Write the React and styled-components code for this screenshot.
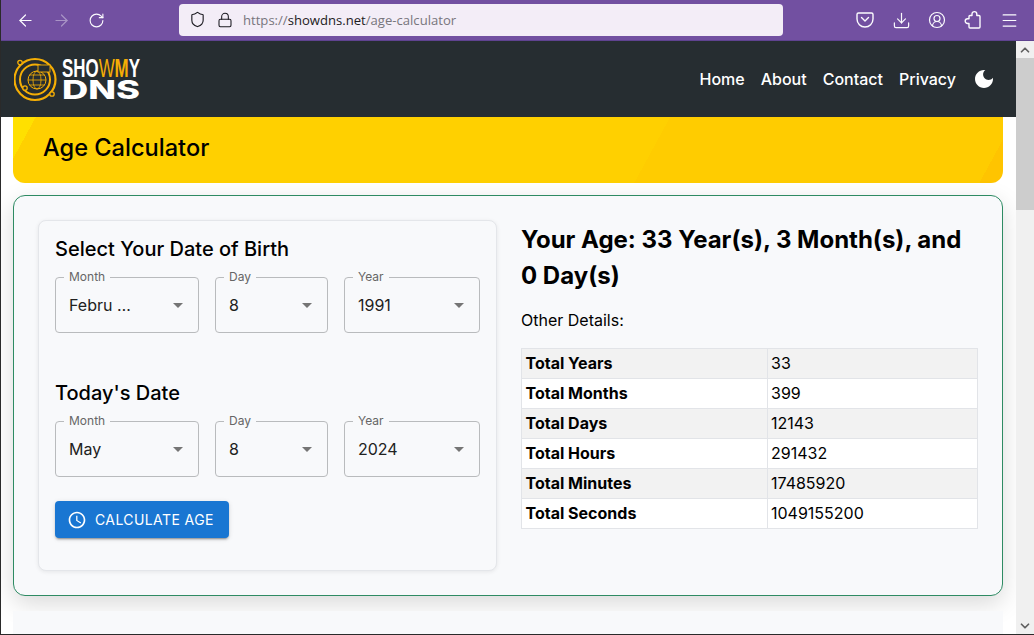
import styled, { createGlobalStyle } from 'styled-components';
import { ArrowLeft, ArrowRight, RotateCw, Shield, Lock, Download, CircleUserRound, Menu, ChevronUp, ChevronDown } from 'lucide-react';

const GlobalStyle = createGlobalStyle`
  html, body {
    margin: 0;
    height: 100%;
    overflow: hidden;
    background: #fff;
  }
  body {
    font-family: 'Inter', 'Liberation Sans', sans-serif;
    color: #000;
  }
`;

const birthFields = [
  { label: 'Month', value: 'Febru …' },
  { label: 'Day', value: '8' },
  { label: 'Year', value: '1991' },
];
const todayFields = [
  { label: 'Month', value: 'May' },
  { label: 'Day', value: '8' },
  { label: 'Year', value: '2024' },
];
const details = [
  ['Total Years', '33'],
  ['Total Months', '399'],
  ['Total Days', '12143'],
  ['Total Hours', '291432'],
  ['Total Minutes', '17485920'],
  ['Total Seconds', '1049155200'],
];

const Logo = () => (
  <svg width='130' height='58' viewBox='0 -4 130 58'>
    <g fill='none' stroke='#f5ae05'>
      <circle cx='21' cy='25.5' r='20.5' strokeWidth='2.2' />
      <circle cx='21' cy='25.5' r='15' strokeWidth='2' />
      <circle cx='6' cy='8.5' r='2.2' strokeWidth='1.3' fill='#262d31' />
      <circle cx='11' cy='34' r='2.2' strokeWidth='1.3' fill='#262d31' />
      <circle cx='38' cy='40' r='2.2' strokeWidth='1.3' fill='#262d31' />
      <circle cx='23' cy='26' r='9' strokeWidth='1' />
      <ellipse cx='23' cy='26' rx='4' ry='9' strokeWidth='.8' />
      <path strokeWidth='.8' d='M14 26h18M15.5 21h15M15.5 31h15' />
      <rect x='24' y='11' width='12' height='7' strokeWidth='.9' fill='#262d31' />
    </g>
    <text x='48' y='23' fontFamily='Liberation Sans' fontWeight='700' fontSize='25' fill='#fff' textLength='78' lengthAdjust='spacingAndGlyphs'>
      SHO<tspan fill='#f5ae05' fontWeight='400'>W</tspan><tspan fill='#f5ae05'>M</tspan>Y
    </text>
    <text x='48' y='45' fontFamily='Inter' fontWeight='800' fontSize='26' fill='#fff' textLength='78' lengthAdjust='spacingAndGlyphs'>DNS</text>
  </svg>
);

const PocketIcon = () => (
  <svg width='20' height='20' viewBox='0 0 20 20' fill='none' stroke='currentColor' strokeWidth='1.4' strokeLinecap='round' strokeLinejoin='round'>
    <path d='M3.5 3h13A1.5 1.5 0 0 1 18 4.5V9a8 8 0 0 1-16 0V4.5A1.5 1.5 0 0 1 3.5 3z' />
    <path d='M6.5 7.5 10 11l3.5-3.5' />
  </svg>
);

const PuzzleIcon = () => (
  <svg width='20' height='20' viewBox='0 0 20 20' fill='none' stroke='currentColor' strokeWidth='1.4' strokeLinejoin='round'>
    <path d='M9 5.5V4a2.4 2.4 0 0 1 4.8 0v1.5H16a1 1 0 0 1 1 1V17a1 1 0 0 1-1 1H7a1 1 0 0 1-1-1v-3.5H4.6a2.4 2.4 0 0 1 0-4.8H6V6.5a1 1 0 0 1 1-1z' />
  </svg>
);

const MoonIcon = () => (
  <svg width='24' height='24' viewBox='0 0 24 24' fill='#fff'>
    <path d='M12 3c-4.97 0-9 4.03-9 9s4.03 9 9 9 9-4.03 9-9c0-.46-.04-.92-.1-1.36-.98 1.37-2.58 2.26-4.4 2.26-2.98 0-5.4-2.42-5.4-5.4 0-1.81.89-3.42 2.26-4.4-.44-.06-.9-.1-1.36-.1z' />
  </svg>
);

const ClockIcon = () => (
  <svg width='20' height='20' viewBox='0 0 24 24' fill='#fff'>
    <path d='M11.99 2C6.47 2 2 6.48 2 12s4.47 10 9.99 10C17.52 22 22 17.52 22 12S17.52 2 11.99 2zM12 20c-4.42 0-8-3.58-8-8s3.58-8 8-8 8 3.58 8 8-3.58 8-8 8zm.5-13H11v6l5.25 3.15.75-1.23-4.5-2.67z' />
  </svg>
);

const SelectRow = ({ fields }) => (
  <Selects>
    {fields.map((f) => (
      <SelectBox key={f.label}>
        <FloatLabel>{f.label}</FloatLabel>
        <span>{f.value}</span>
        <Caret />
      </SelectBox>
    ))}
  </Selects>
);

const App = () => (
  <Window>
    <GlobalStyle />
    <BrowserBar>
      <NavIcons>
        <ArrowLeft size={19} strokeWidth={1.5} />
        <DimIcon><ArrowRight size={19} strokeWidth={1.5} /></DimIcon>
        <RotateCw size={17} strokeWidth={1.6} />
      </NavIcons>
      <UrlBox>
        <Shield size={17} strokeWidth={1.6} />
        <Lock size={16} strokeWidth={1.6} />
        <UrlText>https://<b>showdns.net</b>/age-calculator</UrlText>
      </UrlBox>
      <ToolIcons>
        <PocketIcon />
        <Download size={19} strokeWidth={1.5} />
        <CircleUserRound size={18} strokeWidth={1.6} />
        <PuzzleIcon />
        <Menu size={19} strokeWidth={1.5} />
      </ToolIcons>
    </BrowserBar>
    <Viewport>
      <Page>
        <TopNav>
          <Logo />
          <NavLinks>
            <NavLink>Home</NavLink>
            <NavLink>About</NavLink>
            <NavLink>Contact</NavLink>
            <NavLink>Privacy</NavLink>
            <MoonIcon />
          </NavLinks>
        </TopNav>
        <Content>
          <Banner>
            <BannerTitle>Age Calculator</BannerTitle>
          </Banner>
          <MainCard>
            <FormCard>
              <FormTitle>Select Your Date of Birth</FormTitle>
              <SelectRow fields={birthFields} />
              <FormTitle $second>Today's Date</FormTitle>
              <SelectRow fields={todayFields} />
              <CalcButton>
                <ClockIcon />
                Calculate Age
              </CalcButton>
            </FormCard>
            <Results>
              <AgeHeading>Your Age: 33 Year(s), 3 Month(s), and 0 Day(s)</AgeHeading>
              <OtherLabel>Other Details:</OtherLabel>
              <DetailTable>
                <tbody>
                  {details.map(([name, value]) => (
                    <tr key={name}>
                      <th>{name}</th>
                      <td>{value}</td>
                    </tr>
                  ))}
                </tbody>
              </DetailTable>
            </Results>
          </MainCard>
          <NextSection />
        </Content>
      </Page>
      <Scrollbar>
        <ScrollBtn><ChevronUp size={14} strokeWidth={3} /></ScrollBtn>
        <ScrollThumb />
        <ScrollTrack />
        <ScrollBtn><ChevronDown size={14} strokeWidth={3} /></ScrollBtn>
      </Scrollbar>
    </Viewport>
  </Window>
);

export default App;

const Window = styled.div`
  height: 634px;
  display: flex;
  flex-direction: column;
  overflow: hidden;
  border-left: 1px solid #2a2a2a;
  border-bottom: 1px solid #2a2a2a;
`;
const BrowserBar = styled.div`
  flex: 0 0 41px;
  box-sizing: border-box;
  height: 41px;
  background: #7250a1;
  border-bottom: 1px solid #5f4390;
  display: flex;
  align-items: center;
  color: #fbfbfe;
`;
const NavIcons = styled.div`
  width: 178px;
  padding-left: 15px;
  box-sizing: border-box;
  display: flex;
  align-items: center;
  gap: 17px;
`;
const DimIcon = styled.span`
  display: flex;
  opacity: 0.4;
`;
const UrlBox = styled.div`
  width: 604px;
  height: 32px;
  box-sizing: border-box;
  margin-top: -1px;
  background: #f3edf7;
  border-radius: 4px;
  color: #1c1b22;
  display: flex;
  align-items: center;
  gap: 11px;
  padding-left: 10px;
`;
const UrlText = styled.span`
  margin-left: -1px;
  font-family: 'Open Sans', sans-serif;
  font-size: 13.1px;
  color: #77757c;
  b {
    font-weight: 400;
    color: #1c1b22;
  }
`;
const ToolIcons = styled.div`
  margin-left: 72px;
  display: flex;
  align-items: center;
  gap: 17px;
`;
const Viewport = styled.div`
  flex: 1;
  display: flex;
  min-height: 0;
`;
const Page = styled.div`
  flex: 1;
  min-width: 0;
  overflow: hidden;
`;
const TopNav = styled.nav`
  height: 76px;
  box-sizing: border-box;
  background: #262d31;
  display: flex;
  align-items: center;
  justify-content: space-between;
  padding: 0 20px 0 13px;
`;
const NavLinks = styled.div`
  display: flex;
  align-items: center;
`;
const NavLink = styled.a`
  color: #fff;
  font-size: 16px;
  font-weight: 500;
  margin-right: 16px;
`;
const Content = styled.main`
  padding: 0 13px 0 12px;
`;
const Banner = styled.div`
  height: 66px;
  box-sizing: border-box;
  padding: 0 0 4px 30px;
  display: flex;
  align-items: center;
  border-radius: 0 0 12px 12px;
  background: linear-gradient(118.6deg, #ffe000 0 20px, #ffd000 20px 577px, #ffcc00 577px 880px, #ffc400 880px);
`;
const BannerTitle = styled.h1`
  margin: 0;
  font-size: 23.6px;
  font-weight: 500;
  line-height: 1.2;
`;
const MainCard = styled.section`
  margin-top: 12px;
  height: 401px;
  box-sizing: border-box;
  padding: 24px;
  background: #f8f9fb;
  border: 1px solid #2e8b63;
  border-radius: 12px;
  box-shadow: 0 8px 24px rgba(0, 0, 0, 0.15);
  display: flex;
`;
const FormCard = styled.div`
  width: 459px;
  height: 351px;
  box-sizing: border-box;
  padding: 16px;
  background: #f8f9fb;
  border: 1px solid #e4e6ea;
  border-radius: 8px;
  box-shadow: 0 1px 4px rgba(0, 0, 0, 0.08);
`;
const FormTitle = styled.h2`
  margin: ${({ $second }) => ($second ? '48px' : '0')} 0 16px;
  font-size: 20px;
  font-weight: 500;
  line-height: 24px;
`;
const Selects = styled.div`
  display: grid;
  grid-template-columns: 144px 113px 136px;
  gap: 16px;
`;
const SelectBox = styled.div`
  position: relative;
  height: 56px;
  box-sizing: border-box;
  padding-left: 13px;
  display: flex;
  align-items: center;
  border: 1px solid #b9bbbd;
  border-radius: 4px;
  font-size: 16px;
  color: #212121;
`;
const FloatLabel = styled.label`
  position: absolute;
  top: -8px;
  left: 8px;
  padding: 0 5px;
  background: #f8f9fb;
  font-size: 12px;
  line-height: 14px;
  color: #666;
`;
const Caret = styled.i`
  position: absolute;
  right: 15px;
  top: 25px;
  border-left: 5px solid transparent;
  border-right: 5px solid transparent;
  border-top: 5px solid #757575;
`;
const CalcButton = styled.button`
  margin-top: 24px;
  height: 37px;
  width: 174px;
  padding: 0 0 0 12px;
  border: 0;
  border-radius: 4px;
  background: #1976d2;
  color: #fff;
  font-family: inherit;
  font-size: 14px;
  font-weight: 400;
  letter-spacing: 0.4px;
  text-transform: uppercase;
  display: flex;
  align-items: center;
  gap: 8px;
  box-shadow: 0 3px 1px -2px rgba(0, 0, 0, 0.2), 0 2px 2px 0 rgba(0, 0, 0, 0.14), 0 1px 5px 0 rgba(0, 0, 0, 0.12);
`;
const Results = styled.div`
  margin-left: 24px;
  padding-top: 2px;
  width: 459px;
`;
const AgeHeading = styled.h2`
  margin: 0 0 14px;
  font-size: 24px;
  font-weight: 700;
  line-height: 36px;
`;
const OtherLabel = styled.p`
  margin: 0 0 16px;
  font-size: 16px;
  line-height: 24px;
`;
const DetailTable = styled.table`
  width: 100%;
  border-collapse: collapse;
  font-size: 16px;
  th, td {
    border: 1px solid #e2e4e8;
    padding: 3px 4px 3px 3.5px;
    line-height: 23px;
    text-align: left;
  }
  th {
    width: 237px;
    font-weight: 700;
  }
  tr:nth-child(odd) {
    background: #f2f2f2;
  }
  tr:nth-child(even) {
    background: #fff;
  }
`;
const NextSection = styled.div`
  margin-top: 15px;
  height: 40px;
  background: #f8f9fb;
`;
const Scrollbar = styled.aside`
  flex: 0 0 18px;
  background: #f0f0f0;
  display: flex;
  flex-direction: column;
`;
const ScrollBtn = styled.div`
  height: 17px;
  display: flex;
  align-items: center;
  justify-content: center;
  color: #606060;
`;
const ScrollThumb = styled.div`
  height: 152px;
  background: #cdcdcd;
`;
const ScrollTrack = styled.div`
  flex: 1;
`;
